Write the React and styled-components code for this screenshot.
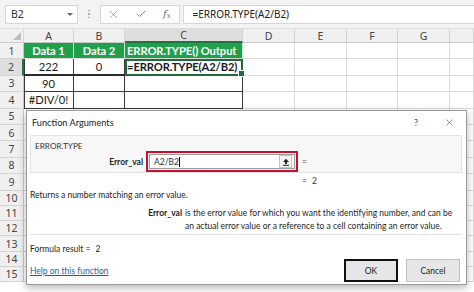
import React from "react";
import styled, { createGlobalStyle } from "styled-components";
import { X, Check } from "lucide-react";

const Global = createGlobalStyle`
  html, body { margin: 0; padding: 0; background: #fff; }
  body { width: 474px; height: 292px; overflow: hidden; font-family: "Noto Sans", "Liberation Sans", sans-serif; }
`;

const Page = styled.div`
  position: relative;
  width: 474px;
  height: 292px;
  overflow: hidden;
  background: #fff;
`;

const FormulaBar = styled.div`
  display: flex;
  align-items: center;
  height: 29px;
  padding: 0 0 0 5px;
  box-sizing: border-box;
  background: #f3f3f3;
  border-bottom: 1px solid #dcdcdc;
`;

const NameBox = styled.div`
  display: flex;
  align-items: center;
  justify-content: space-between;
  width: 73px;
  height: 19px;
  box-sizing: border-box;
  padding: 0 4px 0 5px;
  background: #fff;
  border: 1px solid #d6d6d6;
  font-size: 10.5px;
  color: #333;
`;

const Caret = styled.span`
  width: 0;
  height: 0;
  border-left: 3px solid transparent;
  border-right: 3px solid transparent;
  border-top: 3px solid #666;
`;

const Dots = styled.div`
  display: flex;
  flex-direction: column;
  gap: 2px;
  margin: 0 10px;
  & > i { width: 1.5px; height: 1.5px; background: #aaa; display: block; }
`;

const IconBox = styled.div`
  display: flex;
  align-items: center;
  justify-content: space-around;
  width: 80px;
  height: 19px;
  box-sizing: border-box;
  background: #fff;
  border: 1px solid #d6d6d6;
  color: #777;
`;

const Fx = styled.span`
  font-family: "DejaVu Serif", "Liberation Serif", serif;
  font-style: italic;
  font-size: 10px;
  color: #5a7a5a;
  & > sub { font-size: 7px; vertical-align: -1px; }
`;

const FormulaInput = styled.div`
  flex: 1;
  height: 19px;
  margin-left: 3px;
  box-sizing: border-box;
  padding-left: 9px;
  display: flex;
  align-items: center;
  background: #fff;
  border: 1px solid #d6d6d6;
  border-right: none;
  font-size: 10px;
  color: #222;
`;

const Sheet = styled.div`
  display: grid;
  grid-template-columns: 24px 50px 51px 118px 52px 52px 51px 52px 1fr;
  grid-template-rows: 14px repeat(9, 16.4px) repeat(6, 15.3px);
  background: #fff;
`;

const Corner = styled.div`
  position: relative;
  background: #f0f0f0;
  border-right: 1px solid #d4d4d4;
  border-bottom: 1px solid #c8c8c8;
  &::after {
    content: "";
    position: absolute;
    right: 2px;
    bottom: 2px;
    border-left: 8px solid transparent;
    border-bottom: 8px solid #bdbdbd;
  }
`;

const ColHead = styled.div`
  display: flex;
  align-items: center;
  justify-content: center;
  font-size: 10.5px;
  color: #444;
  background: ${(p) => (p.$active ? "#dedede" : "#f0f0f0")};
  border-right: 1px solid #d4d4d4;
  border-bottom: ${(p) => (p.$active ? "2px solid #217346" : "1px solid #c8c8c8")};
  box-sizing: border-box;
`;

const RowHead = styled.div`
  display: flex;
  align-items: center;
  justify-content: center;
  font-size: 10.5px;
  color: #444;
  background: ${(p) => (p.$active ? "#dedede" : "#f0f0f0")};
  border-right: ${(p) => (p.$active ? "2px solid #217346" : "1px solid #c8c8c8")};
  border-bottom: 1px solid #d4d4d4;
  box-sizing: border-box;
`;

const Cell = styled.div`
  position: relative;
  display: flex;
  align-items: center;
  justify-content: ${(p) => (p.$left ? "flex-start" : "center")};
  padding: 0 2px;
  box-sizing: border-box;
  white-space: nowrap;
  font-family: Lato, "Noto Sans", sans-serif;
  font-size: 11.2px;
  font-weight: ${(p) => (p.$bold ? 700 : 400)};
  letter-spacing: ${(p) => (p.$bold ? "-0.1px" : "0")};
  color: ${(p) => (p.$head ? "#fff" : "#1a1a1a")};
  background: ${(p) => (p.$head ? "#21a04b" : "#fff")};
  border-right: 1px solid ${(p) => (p.$head ? "#cfe9d7" : p.$boxed ? "#3a3a3a" : "#dadada")};
  border-bottom: ${(p) => (p.$thick ? "2px solid #2b2b2b" : `1px solid ${p.$boxed ? "#3a3a3a" : "#dadada"}`)};
  box-shadow: ${(p) => (p.$edge ? "inset 1px 0 #3a3a3a" : "none")};
  ${(p) => p.$selected && `
    outline: 2px solid #1d6b3b;
    outline-offset: -2px;
    &::after {
      content: "";
      position: absolute;
      right: -3px;
      bottom: -3px;
      width: 5px;
      height: 5px;
      background: #1d6b3b;
      border: 1px solid #fff;
      z-index: 2;
    }
  `}
`;

const Dialog = styled.div`
  position: absolute;
  left: 26px;
  top: 110px;
  width: 441px;
  height: 175px;
  box-sizing: border-box;
  background: #fff;
  border: 1px solid #9a9a9a;
  box-shadow: 0 3px 8px rgba(0, 0, 0, 0.28);
  display: flex;
  flex-direction: column;
  font-family: Lato, "Noto Sans", sans-serif;
  font-size: 8.5px;
  color: #1e1e1e;
  z-index: 5;
  & > * { flex-shrink: 0; }
`;

const TitleBar = styled.div`
  display: flex;
  align-items: center;
  height: 23px;
  padding: 0 7px 0 5px;
  font-size: 9.2px;
  color: #222;
`;

const Title = styled.span`
  flex: 1;
`;

const TitleButton = styled.span`
  width: 20px;
  display: flex;
  justify-content: center;
  align-items: center;
  color: #444;
  font-size: 9px;
  & + & { margin-left: 13px; }
`;

const Body = styled.div`
  display: flex;
  flex-direction: column;
  padding: 0 4px 0 3px;
  & > * { flex-shrink: 0; }
`;

const Group = styled.div`
  margin-top: 1px;
  height: 38px;
  box-sizing: border-box;
  background: #f7f7f7;
  border: 1px solid #e4e4e4;
  padding: 5px 0 0 4px;
  display: flex;
  flex-direction: column;
`;

const GroupLabel = styled.div`
  font-size: 8.2px;
  line-height: 10px;
  color: #333;
`;

const ArgRow = styled.div`
  display: flex;
  align-items: center;
`;

const ArgLabel = styled.div`
  width: 111px;
  text-align: right;
  font-weight: 700;
  padding-right: 3px;
  box-sizing: border-box;
`;

const RedFrame = styled.div`
  width: 152px;
  height: 21px;
  box-sizing: border-box;
  border: 2px solid #c8102e;
  padding: 1px;
  display: flex;
`;

const InputBox = styled.div`
  flex: 1;
  display: flex;
  align-items: center;
  background: #fff;
  border: 1px solid #9c9c9c;
  padding: 0 2px 0 4px;
  color: #333;
`;

const InputText = styled.span`
  flex: 1;
  & > i {
    display: inline-block;
    width: 1px;
    height: 10px;
    background: #000;
    vertical-align: -2px;
  }
`;

const RefButton = styled.span`
  width: 11px;
  height: 11px;
  display: flex;
  align-items: center;
  justify-content: center;
  border: 1px solid #c4c4c4;
  background: #f4f4f4;
`;

const Eq = styled.span`
  margin-left: 4px;
  color: #555;
`;

const ValueLine = styled.div`
  height: 16px;
  display: flex;
  align-items: center;
  padding-left: 272px;
  gap: 5px;
  color: #333;
`;

const Summary = styled.div`
  height: 12px;
  line-height: 12px;
`;

const Desc = styled.div`
  display: grid;
  grid-template-columns: 152px 1fr;
  column-gap: 3px;
  margin-top: 6px;
  line-height: 13px;
`;

const DescLabel = styled.div`
  text-align: right;
  font-weight: 700;
`;

const DescText = styled.div`
  padding-right: 1px;
`;

const Rule = styled.div`
  height: 1px;
  background: #e2e2e2;
  margin-top: 1px;
`;

const ResultLine = styled.div`
  margin-top: 8px;
  line-height: 12px;
  & > b { font-weight: 400; margin-left: 5px; }
`;

const Footer = styled.div`
  display: flex;
  align-items: center;
  margin-top: 4px;
  padding-right: 2px;
`;

const HelpLink = styled.a`
  flex: 1;
  color: #1d5fb3;
  text-decoration: underline;
`;

const Button = styled.div`
  width: 54px;
  height: 23px;
  box-sizing: border-box;
  display: flex;
  align-items: center;
  justify-content: center;
  margin-left: 8px;
  background: #e6e6e6;
  border: ${(p) => (p.$default ? "2px solid #111" : "1px solid #c2c2c2")};
  color: #222;
`;

const cols = ["A", "B", "C", "D", "E", "F", "G", ""];

const rows = [
  [
    { t: "Data 1", head: true, bold: true },
    { t: "Data 2", head: true, bold: true },
    { t: "ERROR.TYPE() Output", head: true, bold: true, left: true },
  ],
  [
    { t: "222", boxed: true, thick: true, edge: true },
    { t: "0", boxed: true, thick: true },
    { t: "=ERROR.TYPE(A2/B2)", boxed: true, thick: true, bold: true, left: true, selected: true },
  ],
  [
    { t: "90", boxed: true, edge: true },
    { t: "", boxed: true },
    { t: "", boxed: true },
  ],
  [
    { t: "#DIV/0!", boxed: true, edge: true },
    { t: "", boxed: true },
    { t: "", boxed: true },
  ],
];

function UploadIcon() {
  return (
    <svg width="8" height="8" viewBox="0 0 8 8">
      <path d="M4 0.8 L7 4 H5 V6 H3 V4 H1 Z" fill="#222" />
      <rect x="1" y="6.8" width="6" height="1" fill="#222" />
    </svg>
  );
}

export default function App() {
  const gridRows = [];
  for (let r = 1; r <= 15; r++) {
    const data = rows[r - 1] || [];
    gridRows.push(
      <RowHead key={`h${r}`} $active={r === 2}>
        {r}
      </RowHead>
    );
    for (let c = 0; c < 8; c++) {
      const d = data[c] || {};
      gridRows.push(
        <Cell
          key={`c${r}-${c}`}
          $head={d.head}
          $bold={d.bold}
          $left={d.left}
          $boxed={d.boxed}
          $thick={d.thick}
          $edge={d.edge}
          $selected={d.selected}
        >
          {d.t}
        </Cell>
      );
    }
  }

  return (
    <Page>
      <Global />
      <FormulaBar>
        <NameBox>
          <span>B2</span>
          <Caret />
        </NameBox>
        <Dots>
          <i />
          <i />
          <i />
        </Dots>
        <IconBox>
          <X size={11} strokeWidth={1.4} />
          <Check size={12} strokeWidth={1.6} />
          <Fx>
            f<sub>x</sub>
          </Fx>
        </IconBox>
        <FormulaInput>=ERROR.TYPE(A2/B2)</FormulaInput>
      </FormulaBar>
      <Sheet>
        <Corner />
        {cols.map((c, i) => (
          <ColHead key={i} $active={c === "C"}>
            {c}
          </ColHead>
        ))}
        {gridRows}
      </Sheet>
      <Dialog>
        <TitleBar>
          <Title>Function Arguments</Title>
          <TitleButton>?</TitleButton>
          <TitleButton>
            <X size={11} strokeWidth={1.2} />
          </TitleButton>
        </TitleBar>
        <Body>
          <Group>
            <GroupLabel>ERROR.TYPE</GroupLabel>
            <ArgRow>
              <ArgLabel>Error_val</ArgLabel>
              <RedFrame>
                <InputBox>
                  <InputText>
                    A2/B2
                    <i />
                  </InputText>
                  <RefButton>
                    <UploadIcon />
                  </RefButton>
                </InputBox>
              </RedFrame>
              <Eq>=</Eq>
            </ArgRow>
          </Group>
          <ValueLine>
            <span>=</span>
            <span>2</span>
          </ValueLine>
          <Summary>Returns a number matching an error value.</Summary>
          <Desc>
            <DescLabel>Error_val</DescLabel>
            <DescText>
              is the error value for which you want the identifying number, and can be an actual error value or a reference to a cell containing an error value.
            </DescText>
          </Desc>
          <Rule />
          <ResultLine>
            Formula result =<b>2</b>
          </ResultLine>
          <Footer>
            <HelpLink href="#">Help on this function</HelpLink>
            <Button $default>OK</Button>
            <Button>Cancel</Button>
          </Footer>
        </Body>
      </Dialog>
    </Page>
  );
}
